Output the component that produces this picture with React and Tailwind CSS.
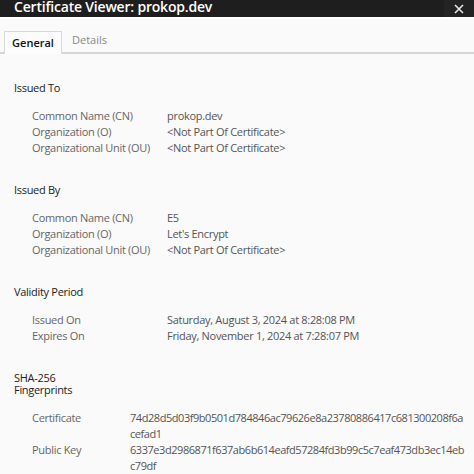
import React from 'react'

const SECTIONS = [
  {
    title: 'Issued To',
    cols: 'grid-cols-[135px_1fr]',
    rows: [
      ['Common Name (CN)', ['prokop.dev']],
      ['Organization (O)', ['<Not Part Of Certificate>']],
      ['Organizational Unit (OU)', ['<Not Part Of Certificate>']],
    ],
  },
  {
    title: 'Issued By',
    cols: 'grid-cols-[135px_1fr]',
    rows: [
      ['Common Name (CN)', ['E5']],
      ['Organization (O)', ["Let's Encrypt"]],
      ['Organizational Unit (OU)', ['<Not Part Of Certificate>']],
    ],
  },
  {
    title: 'Validity Period',
    cols: 'grid-cols-[135px_1fr]',
    rows: [
      ['Issued On', ['Saturday, August 3, 2024 at 8:28:08 PM']],
      ['Expires On', ['Friday, November 1, 2024 at 7:28:07 PM']],
    ],
  },
  {
    title: 'SHA-256 Fingerprints',
    cols: 'grid-cols-[98px_1fr]',
    hex: true,
    rows: [
      ['Certificate', ['74d28d5d03f9b0501d784846ac79626e8a23780886417c681300208f6a', 'cefad1']],
      ['Public Key', ['6337e3d2986871f637ab6b614eafd57284fd3b99c5c7eaf473db3ec14eb', 'c79df']],
    ],
  },
]

function Section({ s }) {
  return (
    <div className="mt-[26px] first:mt-0">
      <div className="max-w-[85px] text-[#222] leading-[12px] py-[2px]">{s.title}</div>
      <div className={`grid ${s.cols} pl-[18px] mt-[12px] leading-4`}>
        {s.rows.map(([label, value]) => (
          <React.Fragment key={label}>
            <div className="text-[#666] whitespace-nowrap">{label}</div>
            <div className={`text-[#555] whitespace-nowrap ${s.hex ? 'tracking-[-0.45px]' : ''}`}>
              {value.map(v => <div key={v}>{v}</div>)}
            </div>
          </React.Fragment>
        ))}
      </div>
    </div>
  )
}

export default function App() {
  return (
    <div className="w-[474px] h-[474px] overflow-hidden bg-[#fafafa] text-[11px] tracking-[-0.3px]" style={{ fontFamily: '"Open Sans", "Noto Sans", sans-serif' }}>
      <div className="h-[17px] bg-[#1e1e1e] flex items-start overflow-hidden">
        <div className="pl-[14px] flex-1 text-white text-[14px] leading-[13px] font-semibold tracking-[-0.2px] whitespace-nowrap">
          Certificate Viewer: prokop.dev
        </div>
        <div className="w-[30px] h-[17px] flex items-center justify-center bg-[#232323]">
          <svg width="10" height="10" viewBox="0 0 10 10" stroke="#e8e8e8" strokeWidth="1.6" fill="none">
            <path d="M1 1L9 9M9 1L1 9" />
          </svg>
        </div>
      </div>
      <div className="h-[2px] bg-white" />
      <div className="flex items-end h-[35px] px-[4px] border-b-2 border-[#d6d6d6]">
        <div className="h-[23px] w-[58px] bg-[#fcfcfc] border border-b-0 border-[#d9d9d9] flex items-center justify-center font-semibold text-[#111] tracking-normal -mb-[2px]">
          General
        </div>
        <div className="h-[23px] px-[10px] flex items-center text-[#888] tracking-normal">Details</div>
      </div>
      <div className="pl-[14px] pt-[26px]">
        {SECTIONS.map(s => <Section key={s.title} s={s} />)}
      </div>
    </div>
  )
}
